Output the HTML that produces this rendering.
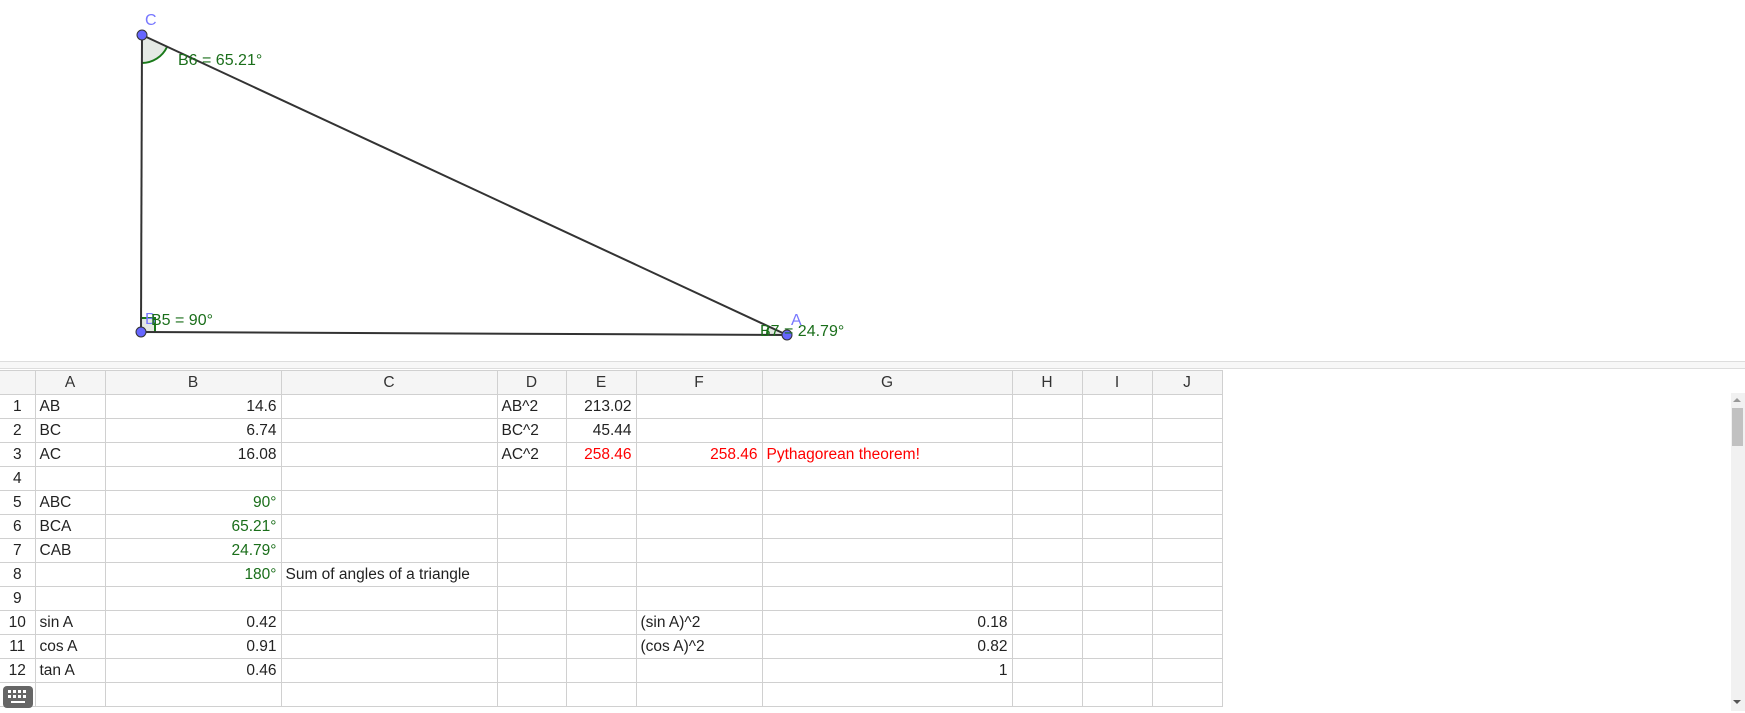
<!DOCTYPE html>
<html><head><meta charset="utf-8"><style>
body{margin:0;width:1745px;height:711px;overflow:hidden;background:#fff;font-family:"Liberation Sans",Arial,sans-serif;position:relative}
#sep{position:absolute;left:0;top:361px;width:1745px;height:8px;background:#f7f7f7;border-top:1px solid #ddd;border-bottom:1px solid #ddd;box-sizing:border-box}
table{position:absolute;left:0;top:370px;border-collapse:collapse;table-layout:fixed;font-size:15.5px;color:#222}
td{border:1px solid #d0d0d0;height:24px;padding:0 4px;white-space:nowrap;overflow:visible;box-sizing:border-box}
tr.h td{background:#f5f5f5;text-align:center;color:#333}
td.r{background:#f5f5f5;text-align:center;padding:0;border-left:none}
tr:not(.h) td.r{background:#fff}
.n{text-align:right}
.g{color:#1a6e1a}.red{color:#f00}
#sb{position:absolute;left:1731px;top:393px;width:14px;height:318px;background:#f1f1f1}
#thumb{position:absolute;left:1732px;top:408px;width:11px;height:38px;background:#c1c1c1}
#kb{position:absolute;left:3px;top:686px;width:30px;height:22px;background:#666;border-radius:4px}
</style></head><body>
<svg width="1745" height="360" style="position:absolute;left:0;top:0" font-family="Liberation Sans, Arial, sans-serif" font-size="16">
<path d="M142,35 L142,63 A28,28 0 0 0 167,47 Z" fill="#e4e9e4" stroke="none"/>
<path d="M142,63 A28,28 0 0 0 167,47" fill="none" stroke="#1a7a1a" stroke-width="2"/>
<rect x="141" y="318" width="14" height="14" fill="#e4e9e4"/>
<path d="M141,318 L155,318 L155,332" fill="none" stroke="#1a7a1a" stroke-width="2"/>
<path d="M767,335 A20,20 0 0 1 769,326 L787,335Z" fill="#e4e9e4"/>
<path d="M767,335 A20,20 0 0 1 769,326" fill="none" stroke="#1a7a1a" stroke-width="2"/>
<line x1="142" y1="35" x2="141" y2="332" stroke="#333" stroke-width="2"/>
<line x1="141" y1="332" x2="787" y2="335" stroke="#333" stroke-width="2"/>
<line x1="142" y1="35" x2="787" y2="335" stroke="#333" stroke-width="2"/>
<circle cx="142" cy="35" r="5" fill="#6666ff" stroke="#333" stroke-width="1"/>
<circle cx="141" cy="332" r="5" fill="#6666ff" stroke="#333" stroke-width="1"/>
<circle cx="787" cy="335" r="5" fill="#6666ff" stroke="#333" stroke-width="1"/>
<text x="145" y="25" fill="#7777ff">C</text>
<text x="145" y="324" fill="#7777ff">B</text>
<text x="791" y="325" fill="#7777ff">A</text>
<text x="178" y="65" fill="#1a6e1a">B6 = 65.21°</text>
<text x="151" y="325" fill="#1a6e1a">B5 = 90°</text>
<text x="760" y="336" fill="#1a6e1a">B7 = 24.79°</text>
</svg>
<div id="sep"></div>
<table>
<colgroup><col style="width:35px"><col style="width:70px"><col style="width:176px"><col style="width:216px"><col style="width:69px"><col style="width:70px"><col style="width:126px"><col style="width:250px"><col style="width:70px"><col style="width:70px"><col style="width:70px"></colgroup>
<tr class="h"><td class="r"></td><td>A</td><td>B</td><td>C</td><td>D</td><td>E</td><td>F</td><td>G</td><td>H</td><td>I</td><td>J</td></tr>
<tr><td class="r">1</td><td>AB</td><td class="n">14.6</td><td></td><td>AB^2</td><td class="n">213.02</td><td></td><td></td><td></td><td></td><td></td></tr>
<tr><td class="r">2</td><td>BC</td><td class="n">6.74</td><td></td><td>BC^2</td><td class="n">45.44</td><td></td><td></td><td></td><td></td><td></td></tr>
<tr><td class="r">3</td><td>AC</td><td class="n">16.08</td><td></td><td>AC^2</td><td class="n red">258.46</td><td class="n red">258.46</td><td class="red">Pythagorean theorem!</td><td></td><td></td><td></td></tr>
<tr><td class="r">4</td><td></td><td></td><td></td><td></td><td></td><td></td><td></td><td></td><td></td><td></td></tr>
<tr><td class="r">5</td><td>ABC</td><td class="n g">90°</td><td></td><td></td><td></td><td></td><td></td><td></td><td></td><td></td></tr>
<tr><td class="r">6</td><td>BCA</td><td class="n g">65.21°</td><td></td><td></td><td></td><td></td><td></td><td></td><td></td><td></td></tr>
<tr><td class="r">7</td><td>CAB</td><td class="n g">24.79°</td><td></td><td></td><td></td><td></td><td></td><td></td><td></td><td></td></tr>
<tr><td class="r">8</td><td></td><td class="n g">180°</td><td>Sum of angles of a triangle</td><td></td><td></td><td></td><td></td><td></td><td></td><td></td></tr>
<tr><td class="r">9</td><td></td><td></td><td></td><td></td><td></td><td></td><td></td><td></td><td></td><td></td></tr>
<tr><td class="r">10</td><td>sin A</td><td class="n">0.42</td><td></td><td></td><td></td><td>(sin A)^2</td><td class="n">0.18</td><td></td><td></td><td></td></tr>
<tr><td class="r">11</td><td>cos A</td><td class="n">0.91</td><td></td><td></td><td></td><td>(cos A)^2</td><td class="n">0.82</td><td></td><td></td><td></td></tr>
<tr><td class="r">12</td><td>tan A</td><td class="n">0.46</td><td></td><td></td><td></td><td></td><td class="n">1</td><td></td><td></td><td></td></tr>
<tr><td class="r">13</td><td></td><td></td><td></td><td></td><td></td><td></td><td></td><td></td><td></td><td></td></tr>
</table>
<div id="sb"></div><div id="thumb"></div>
<div style="position:absolute;left:1733px;top:398px;width:0;height:0;border:4px solid transparent;border-bottom-color:#999;border-top:none"></div>
<div style="position:absolute;left:1733px;top:700px;width:0;height:0;border:4px solid transparent;border-top-color:#555;border-bottom:none"></div>
<div id="kb"><svg width="30" height="22"><g fill="#fff"><rect x="5" y="4" width="3" height="3"/><rect x="10" y="4" width="3" height="3"/><rect x="15" y="4" width="3" height="3"/><rect x="20" y="4" width="3" height="3"/><rect x="5" y="9" width="3" height="3"/><rect x="10" y="9" width="3" height="3"/><rect x="15" y="9" width="3" height="3"/><rect x="20" y="9" width="3" height="3"/><rect x="8" y="15" width="14" height="2"/></g></svg></div>
</body></html>
